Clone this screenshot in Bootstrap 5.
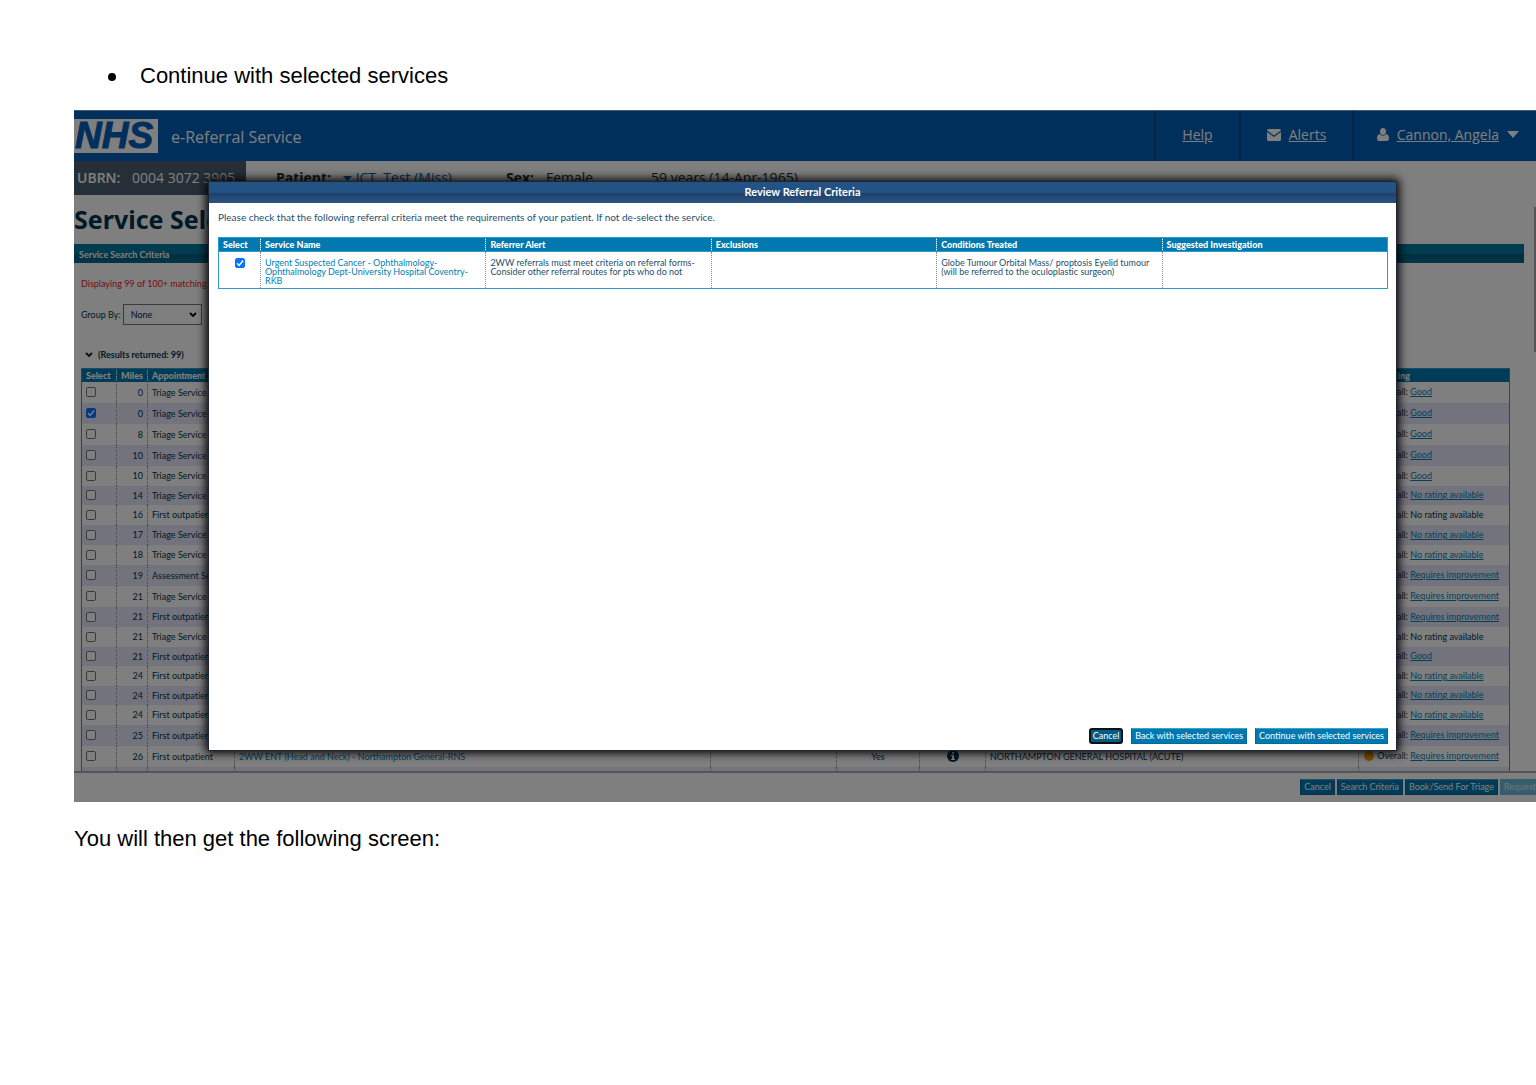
<!DOCTYPE html>
<html lang="en">
<head>
<meta charset="utf-8">
<meta name="viewport" content="width=device-width, initial-scale=1">
<title>e-Referral Service guide</title>
<link rel="stylesheet" href="https://cdn.jsdelivr.net/npm/bootstrap@5.3.0/dist/css/bootstrap.min.css">
<style>
body{background:#fff;color:#000;font-family:"Liberation Sans",Arial,sans-serif;overflow-x:hidden}
.guide{padding:60px 0 0 74px}
.guide-text{font-size:22px;line-height:32px;margin:0}
.guide-list{padding-left:66px;margin:0 0 18px;list-style:none;position:relative}
.guide-list li::before{content:"";position:absolute;left:34px;top:13px;width:8px;height:8px;border-radius:50%;background:#000}
.shot{font-family:Lato,"Open Sans",sans-serif;font-variant-ligatures:none;font-size:9px;line-height:9px;color:#003350;background:#fff;margin-bottom:21px;overflow:hidden}
.topbar{font-family:"Open Sans",sans-serif;background:#005eb8;height:51px;border-top:1px solid #8fb4d0;color:#fff}
.nhs-logo{background:#fff;color:#005eb8;font:italic bold 37px/34px "Liberation Sans",Arial,sans-serif;width:84px;height:34px;padding-left:1px;-webkit-text-stroke:1px #005eb8}
.service-title{font-size:16px;line-height:20px;margin-left:13px;padding-top:2px}
.topcell{border-left:2px solid #004a94;font-size:14px;line-height:20px;padding-bottom:3px}
.topcell a{color:#fff}
.cell-help{width:85px}.cell-alerts{width:113px}.cell-user{width:184px;padding-right:17px}
.patientbar{font-family:"Open Sans",sans-serif;height:34px;font-size:14px;line-height:34px;color:#212b32}
.ubrn{background:#4c5f6f;color:#fff;width:172px;padding-left:3px}
.pname{color:#005eb8}
.p1{padding-left:30px;width:97px}.p2{width:163px}.p3{width:40px}.p4{width:105px}
.page-title{font-size:25px;line-height:34px;font-weight:700;color:#003350;margin:7px 0 8px;font-family:"Noto Sans",sans-serif}
.criteria{height:19px;line-height:22px;background:linear-gradient(#00789f 0 50%,#005e80 51%,#006b8e);color:#fff;margin-right:12px;padding-left:5px;font-weight:700}
.found{color:#f01428;margin:16px 0 16px 7px}
.groupby{padding-left:7px;gap:2px}
.groupby select{width:79px;height:21px;font-size:9px;line-height:12px;padding:0 7px;border:1px solid #767676;border-radius:0;color:#00263f;background:#fff url("data:image/svg+xml,%3Csvg xmlns='http://www.w3.org/2000/svg' viewBox='0 0 8 6'%3E%3Cpath d='M1 1l3 3 3-3' fill='none' stroke='black' stroke-width='1.8'/%3E%3C/svg%3E") no-repeat right 4px center/8px 6px}
.returned{font-weight:700;margin:25px 0 8px 11px;gap:5px;line-height:10px}
.grid{table-layout:fixed;border:1px solid #2a9ccc;border-collapse:collapse;margin:0}
.grid th{background:#0079b0;color:#fff;font-weight:900;padding:0 4px;white-space:nowrap;overflow:hidden;border-right:1px dotted #4a9cc4}
.grid td{padding:0 4px;border-right:1px dotted #8a8a8a;white-space:nowrap;overflow:hidden}
.grid th:last-child,.grid td:last-child{border-right:0}
.results{width:1429px;margin-left:7px}
.results th{height:13px}
.results tr:nth-child(even) td{background:#e6e6fa}
.r21{height:21px}.r20{height:20px}.r19{height:19px}
.results a,.svc{color:#0080b5}
.scroller{height:403px;overflow:hidden}
.tick{appearance:none;width:10px;height:10px;border:1px solid #767676;border-radius:2px;background:#fff;margin:0;display:block}
.tick:checked{border-color:#0075ff;background:#0075ff url("data:image/svg+xml,%3Csvg xmlns='http://www.w3.org/2000/svg' viewBox='0 0 10 10'%3E%3Cpath d='M2 5.2 4.1 7.4 8.2 2.6' fill='none' stroke='white' stroke-width='1.5'/%3E%3C/svg%3E") center/10px}
.rate-dot{display:inline-block;width:10px;height:10px;border-radius:50%;background:#ff9900;vertical-align:-2px;margin:0 1px}
.actions{height:31px;border-top:2px solid #aaa;padding-top:6px;gap:2px;background:#fff}
.act{font-size:9px;line-height:14px;font-family:inherit;font-weight:400;color:#fff;background:#0079b0;border:1px solid #006a9a;border-top-color:#39a3cf;border-radius:0;padding:0 3px;white-space:nowrap}
.act:disabled{background:#69bbdc;border-color:#69bbdc;color:#d8eef7;border-right:0;padding-right:0}
.thumb{right:0;top:97px;width:2px;height:145px;background:#aaa}
.shade{inset:0;background:rgba(0,0,0,.5)}
.review{left:134px;right:139px;top:71px;height:570px;background:#fff;border:1px solid #1c2733;box-shadow:0 0 9px 2px #000;color:#24506e}
.review-head{height:21px;line-height:20px;background:linear-gradient(#225384 0 50%,#1d4068 52%,#2c5580);color:#fff;font-weight:700;font-size:11px;text-align:center;margin:0}
.review-body{padding:10px 8px 6px 9px}
.review-note{margin:0 0 15px;font-size:10px;line-height:9px}
.criteria-grid{width:100%}
.criteria-grid th{height:14px;border-bottom:1px solid #2a9ccc}
.criteria-grid td{height:37px;vertical-align:top;padding-top:6px;white-space:normal}
.review-actions{gap:8px}
.act-focus{background:#005b85;border:2px solid #101010;border-radius:3px;line-height:12px;padding:0 2px}
</style>
<script src="https://cdn.jsdelivr.net/npm/bootstrap@5.3.0/dist/js/bootstrap.bundle.min.js"></script>
</head>
<body>
<main class="guide">
<ul class="guide-list"><li class="guide-text">Continue with selected services</li></ul>
<section class="shot position-relative">
  <header class="topbar d-flex align-items-stretch">
    <div class="d-flex align-items-center flex-grow-1">
      <div class="nhs-logo">NHS</div>
      <div class="service-title">e-Referral Service</div>
    </div>
    <div class="topcell cell-help d-flex align-items-center justify-content-center"><a href="#">Help</a></div>
    <div class="topcell cell-alerts d-flex align-items-center justify-content-center">
      <svg width="14" height="12" viewBox="0 0 14 12" fill="#fff"><path d="M0 1.5Q0 0 1.5 0h11Q14 0 14 1.500L7 6.500 0 1.500z"/><path d="M0 3l7 5 7-5v7.500Q14 12 12.500 12h-11Q0 12 0 10.500z"/></svg>
      <a href="#" class="ms-2">Alerts</a></div>
    <div class="topcell cell-user d-flex align-items-center justify-content-end">
      <svg width="12" height="13" viewBox="0 0 12 13" fill="#fff"><ellipse cx="6" cy="3.500" rx="3" ry="3.500"/><path d="M2.500 6Q0 6.500 0 10.500 0 13 2 13h8q2 0 2-2.500Q12 6.500 9.500 6 6 9.500 2.500 6z"/></svg>
      <a href="#" class="mx-2">Cannon, Angela</a>
      <svg width="12" height="8" viewBox="0 0 12 8" fill="#fff"><path d="M0 0h12L6 7z"/></svg>
    </div>
  </header>
  <div class="patientbar d-flex">
    <div class="ubrn"><b class="fw-semibold">UBRN:</b> <span class="ms-2">0004 3072 3905</span></div>
    <div class="p1"><b>Patient:</b></div>
    <div class="p2 pname"><svg width="9" height="6" viewBox="0 0 9 6" fill="#005eb8"><path d="M0 0h9L4.500 5z"/></svg> ICT, Test (Miss)</div>
    <div class="p3"><b>Sex:</b></div>
    <div class="p4">Female</div>
    <div>59 years (14-Apr-1965)</div>
  </div>
  <div>
    <h1 class="page-title">Service Selection</h1>
    <div class="criteria">Service Search Criteria</div>
    <p class="found">Displaying 99 of 100+ matching services</p>
    <div class="groupby d-flex align-items-center"><label for="grp">Group By:</label>
      <select id="grp" class="form-select"><option>None</option></select></div>
    <div class="returned d-flex align-items-center"><svg width="8" height="6" viewBox="0 0 8 6" fill="none" stroke="#00263f" stroke-width="1.800"><path d="M1 1l3 3 3-3"/></svg>(Results returned: 99)</div>
    <div class="scroller">
    <table class="grid results">
      <colgroup><col style="width:35px"><col style="width:31px"><col style="width:87px"><col style="width:476px"><col style="width:126px"><col style="width:83px"><col style="width:66px"><col style="width:373px"><col></colgroup>
      <thead><tr><th>Select</th><th>Miles</th><th>Appointment Type</th><th>Service Name</th><th></th><th></th><th></th><th></th><th>CQC Rating</th></tr></thead>
      <tbody id="rows"></tbody>
    </table>
    </div>
  </div>
  <div class="actions d-flex align-items-start justify-content-end">
    <button class="act" type="button">Cancel</button>
    <button class="act" type="button">Search Criteria</button>
    <button class="act" type="button">Book/Send For Triage</button>
    <button class="act" type="button" disabled>Request</button>
  </div>
  <div class="thumb position-absolute"></div>
  <div class="shade position-absolute"></div>
  <div class="review position-absolute d-flex flex-column" role="dialog" aria-labelledby="rv">
    <h2 class="review-head" id="rv">Review Referral Criteria</h2>
    <div class="review-body d-flex flex-column flex-grow-1">
      <p class="review-note">Please check that the following referral criteria meet the requirements of your patient. If not de-select the service.</p>
      <table class="grid criteria-grid">
        <colgroup><col style="width:42px"><col><col><col><col><col></colgroup>
        <thead><tr><th>Select</th><th>Service Name</th><th>Referrer Alert</th><th>Exclusions</th><th>Conditions Treated</th><th>Suggested Investigation</th></tr></thead>
        <tbody><tr><td><input class="tick mx-auto" type="checkbox" checked aria-label="Select service"></td>
          <td class="svc">Urgent Suspected Cancer - Ophthalmology-<br>Ophthalmology Dept-University Hospital Coventry-<br>RKB</td>
          <td>2WW referrals must meet criteria on referral forms-<br>Consider other referral routes for pts who do not</td><td></td>
          <td>Globe Tumour Orbital Mass/ proptosis Eyelid tumour<br>(will be referred to the oculoplastic surgeon)</td><td></td></tr></tbody>
      </table>
      <div class="review-actions d-flex justify-content-end mt-auto">
        <button class="act act-focus" type="button">Cancel</button>
        <button class="act" type="button">Back with selected services</button>
        <button class="act" type="button">Continue with selected services</button>
      </div>
    </div>
  </div>
</section>
<p class="guide-text">You will then get the following screen:</p>
</main>
<script>
const T='Triage Service',F='First outpatient',A='Assessment Service',G='Good',N='No rating available',R='Requires improvement';
const info='<svg width="12" height="12" viewBox="0 0 12 12"><circle cx="6" cy="6" r="6" fill="#003350"/><path d="M5 2h2v2H5zM4 5h3v4h1v1H4V9h1V6H4z" fill="#fff"/></svg>';
const list=[[21,0,T,G],[21,0,T,G],[21,8,T,G],[21,10,T,G],[20,10,T,G],[19,14,T,N],[20,16,F,N,1],[20,17,T,N],[20,18,T,N],[21,19,A,R],[21,21,T,R],[20,21,F,R],[20,21,T,N,1],[19,21,F,G],[20,24,F,N],[19,24,F,N],[20,24,F,N],[21,25,F,R],[21,26,F,R]];
const box=(i,on)=>`<td><input class="tick" type="checkbox" aria-label="Select row ${i+1}"${on?' checked':''}></td>`;
document.getElementById('rows').innerHTML=list.map(([h,m,t,r,plain],i)=>{
  const last=i==18;
  return `<tr class="r${h}">${box(i,i==1)}<td class="text-end">${m}</td><td>${t}</td><td class="svc">${last?'2WW ENT (Head and Neck) - Northampton General-RNS':''}</td><td></td><td class="text-center">${last?'Yes':''}</td><td class="text-center">${last?info:''}</td><td>${last?'NORTHAMPTON GENERAL HOSPITAL (ACUTE)':''}</td><td><span class="rate-dot"></span> Overall: ${plain?r:`<a href="#">${r}</a>`}</td></tr>`}).join('')
  +`<tr class="r21">${box(19)}<td></td><td></td><td></td><td></td><td></td><td class="text-center">${info}</td><td></td><td></td></tr>`;
</script>
</body>
</html>
